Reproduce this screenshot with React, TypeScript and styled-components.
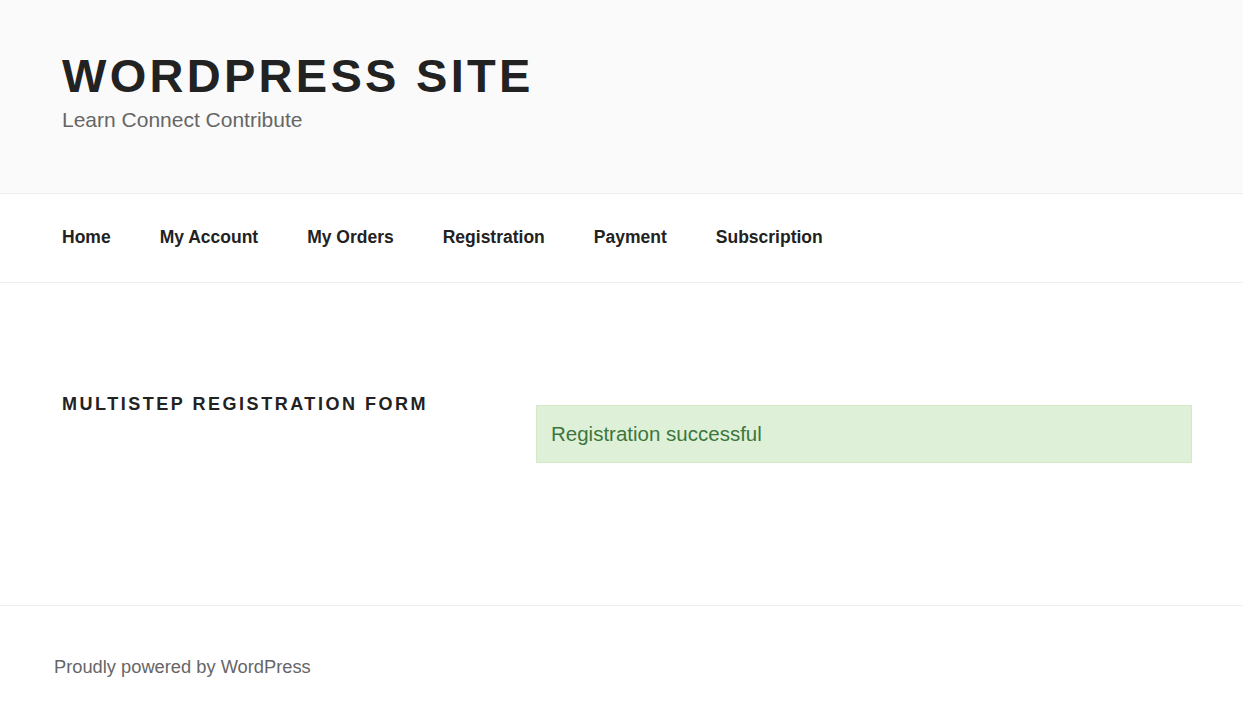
import styled, { createGlobalStyle } from "styled-components";

const GlobalStyle = createGlobalStyle`
  html, body {
    margin: 0;
    padding: 0;
    background: #fff;
    font-family: "Liberation Sans", Arial, sans-serif;
    color: #222;
  }
`;

const navItems = ["Home", "My Account", "My Orders", "Registration", "Payment", "Subscription"];

export default function App() {
  return (
    <>
      <GlobalStyle />
      <Masthead>
        <Branding>
          <SiteTitle>WordPress Site</SiteTitle>
          <Tagline>Learn Connect Contribute</Tagline>
        </Branding>
      </Masthead>

      <NavBar>
        <Menu>
          {navItems.map((item) => (
            <MenuLink key={item} href="#">
              {item}
            </MenuLink>
          ))}
        </Menu>
      </NavBar>

      <Content>
        <PageTitle>Multistep Registration Form</PageTitle>
        <Notice>Registration successful</Notice>
      </Content>

      <Footer>
        <Credit>Proudly powered by WordPress</Credit>
      </Footer>
    </>
  );
}

const Masthead = styled.header`
  background-color: #fafafa;
  border-bottom: 1px solid #eee;
  height: 194px;
  box-sizing: border-box;
`;

const Branding = styled.div`
  padding: 49px 0 0 62px;
`;

const SiteTitle = styled.h1`
  margin: 0;
  font-size: 47px;
  line-height: 54px;
  font-weight: 800;
  text-transform: uppercase;
  letter-spacing: 0.07em;
  color: #222;
`;

const Tagline = styled.p`
  margin: 3px 0 0;
  font-size: 21px;
  line-height: 28px;
  color: #666;
`;

const NavBar = styled.nav`
  height: 89px;
  border-bottom: 1px solid #eee;
  box-sizing: border-box;
  display: flex;
  align-items: center;
  padding: 0 0 2px 62px;
`;

const Menu = styled.div`
  display: flex;
  gap: 49px;
`;

const MenuLink = styled.a`
  font-size: 17.5px;
  font-weight: 700;
  color: #222;
  text-decoration: none;
`;

const Content = styled.main`
  display: grid;
  grid-template-columns: 474px 656px;
  align-items: start;
  padding: 110px 0 0 62px;
  height: 323px;
  box-sizing: border-box;
  border-bottom: 1px solid #eee;
`;

const PageTitle = styled.h2`
  margin: 0;
  font-size: 18px;
  line-height: 22px;
  font-weight: 800;
  text-transform: uppercase;
  letter-spacing: 0.14em;
  color: #222;
`;

const Notice = styled.div`
  margin-top: 12px;
  height: 58px;
  box-sizing: border-box;
  display: flex;
  align-items: center;
  padding: 0 14px;
  background-color: #dff0d8;
  border: 1px solid #d6e9c6;
  color: #3c763d;
  font-size: 20.5px;
`;

const Footer = styled.footer`
  padding: 49px 0 0 54px;
`;

const Credit = styled.p`
  margin: 0;
  font-size: 18.3px;
  line-height: 24px;
  color: #666;
`;
